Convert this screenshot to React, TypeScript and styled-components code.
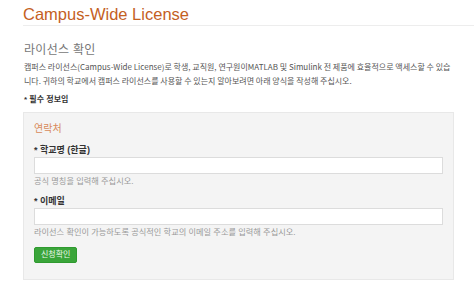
import React from "react";
import styled, { createGlobalStyle } from "styled-components";

const Global = createGlobalStyle`
  html, body { margin: 0; padding: 0; background: #fff; }
  body { font-family: "Liberation Sans", "Noto Sans CJK KR", sans-serif; }
`;

const Page = styled.div`
  width: 474px;
  height: 286px;
  overflow: hidden;
  padding: 4px 0 0 23px;
  box-sizing: border-box;
`;

const Title = styled.h1`
  margin: 0;
  font-size: 16.5px;
  line-height: 21px;
  font-weight: normal;
  color: #c4601f;
  border-bottom: 1px solid #ededed;
`;

const SectionTitle = styled.h2`
  margin: 16px 0 0 1px;
  font-size: 12px;
  line-height: 16px;
  font-weight: normal;
  color: #777;
  letter-spacing: 0.3px;
`;

const Intro = styled.p`
  margin: 2px 0 0 1px;
  width: 427px;
  font-family: "Noto Sans CJK KR", "Liberation Sans", sans-serif;
  font-size: 8px;
  line-height: 14px;
  color: #555;
`;

const Required = styled.div`
  margin: 6px 0 0 1px;
  font-size: 8px;
  line-height: 12px;
  font-weight: bold;
  color: #333;
`;

const Panel = styled.section`
  margin: 6px 0 0 0;
  width: 431px;
  box-sizing: border-box;
  background: #f4f4f4;
  border: 1px solid #e8e8e8;
  padding: 9px 10px 16px 10px;
`;

const PanelTitle = styled.div`
  font-size: 10px;
  line-height: 14px;
  color: #d88a5a;
`;

const Label = styled.label<{ $gap: number }>`
  display: block;
  margin-top: ${(p) => p.$gap}px;
  font-size: 9px;
  line-height: 12px;
  font-weight: bold;
  color: #333;
`;

const Input = styled.input`
  display: block;
  margin-top: 1px;
  width: 409px;
  height: 17px;
  box-sizing: border-box;
  border: 1px solid #dcdcdc;
  background: #fff;
  padding: 0 4px;
  outline: none;
`;

const Help = styled.div`
  margin-top: 2px;
  font-size: 8.2px;
  line-height: 12px;
  color: #999;
`;

const Button = styled.button`
  display: block;
  margin-top: 8px;
  height: 16px;
  padding: 0 6px;
  border: 1px solid #2f9a2f;
  border-radius: 2px;
  background: #3aa53a;
  color: #e8f5e8;
  font-family: "Liberation Sans", "Noto Sans CJK KR", sans-serif;
  font-size: 8px;
  line-height: 14px;
`;

export default function App() {
  return (
    <>
      <Global />
      <Page>
        <Title>Campus-Wide License</Title>
        <SectionTitle>라이선스 확인</SectionTitle>
        <Intro>
          캠퍼스 라이선스(Campus-Wide License)로 학생, 교직원, 연구원이MATLAB 및 Simulink 전 제품에 효율적으로 액세스할 수 있습니다. 귀하의 학교에서 캠퍼스 라이선스를 사용할 수 있는지 알아보려면 아래 양식을 작성해 주십시오.
        </Intro>
        <Required>* 필수 정보임</Required>
        <Panel>
          <PanelTitle>연락처</PanelTitle>
          <Label $gap={8}>* 학교명 (한글)</Label>
          <Input type="text" />
          <Help>공식 명칭을 입력해 주십시오.</Help>
          <Label $gap={7}>* 이메일</Label>
          <Input type="text" />
          <Help>라이선스 확인이 가능하도록 공식적인 학교의 이메일 주소를 입력해 주십시오.</Help>
          <Button type="button">신청확인</Button>
        </Panel>
      </Page>
    </>
  );
}
